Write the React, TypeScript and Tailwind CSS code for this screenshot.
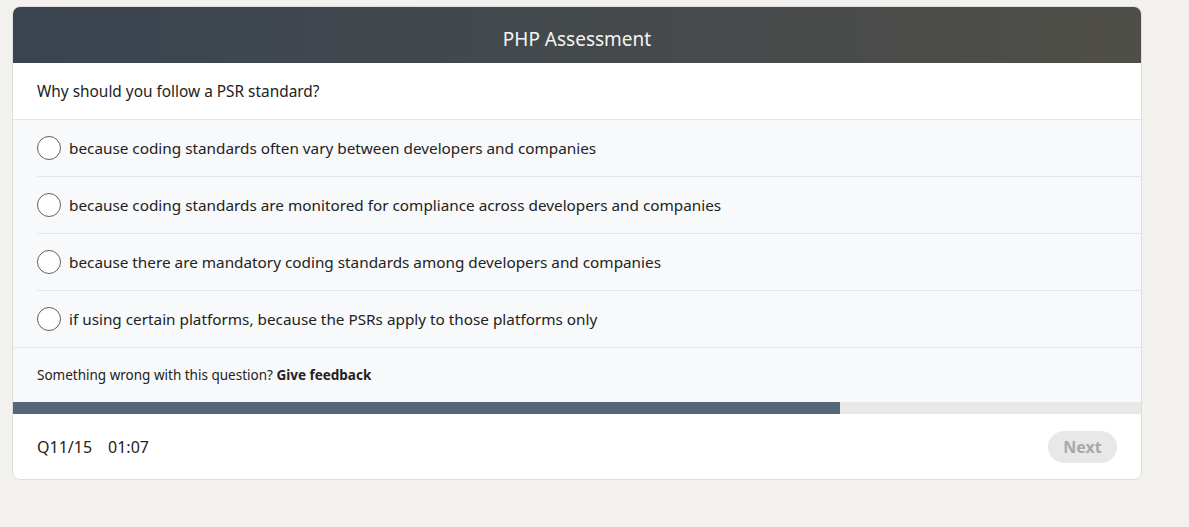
import React from "react";

const options = [
  "because coding standards often vary between developers and companies",
  "because coding standards are monitored for compliance across developers and companies",
  "because there are mandatory coding standards among developers and companies",
  "if using certain platforms, because the PSRs apply to those platforms only",
];

export default function App() {
  return (
    <div className="min-h-[527px] w-full bg-[#f2f1ee] pt-[6px] pl-[12px]" style={{ fontFamily: '"Noto Sans", "Open Sans", sans-serif' }}>
      <div className="w-[1130px] overflow-hidden rounded-[8px] border border-[#dedede] bg-white text-[#222222]">
        <div className="flex h-[56px] items-center justify-center bg-gradient-to-r from-[#3a4450] to-[#4f4e48] pt-[8px] text-[19px] text-[#f4f4f4]">
          PHP Assessment
        </div>
        <div className="flex h-[57px] items-center border-b border-[#e4e5e7] px-[24px] pt-[2px] text-[15.4px]">
          Why should you follow a PSR standard?
        </div>
        <div className="bg-[#f8f9fa]">
          {options.map((o, i) => (
            <div
              key={i}
              className={
                "ml-[24px] flex items-center gap-[8px] " +
                (i < options.length - 1 ? "h-[57px] border-b border-[#e4e5e7]" : "h-[56px]")
              }
            >
              <span className="h-[24px] w-[24px] shrink-0 rounded-full border-[1.5px] border-[#606060] bg-white" />
              <span className="text-[15.3px]">{o}</span>
            </div>
          ))}
          <div className="flex h-[55px] items-center border-t border-[#e4e5e7] px-[24px] text-[13.5px]">
            <span>Something wrong with this question?&nbsp;</span>
            <span className="font-bold">Give feedback</span>
          </div>
        </div>
        <div className="h-[12px] w-full bg-[#e8e8e8]">
          <div className="h-full bg-[#56677a]" style={{ width: `${(11 / 15) * 100}%` }} />
        </div>
        <div className="flex h-[65px] items-center justify-between px-[24px]">
          <div className="flex gap-[16px] text-[16px]">
            <span>Q11/15</span>
            <span>01:07</span>
          </div>
          <button className="h-[32px] w-[69px] rounded-full bg-[#e8e8e8] text-[16px] font-bold text-[#a8a8a8]">
            Next
          </button>
        </div>
      </div>
    </div>
  );
}
